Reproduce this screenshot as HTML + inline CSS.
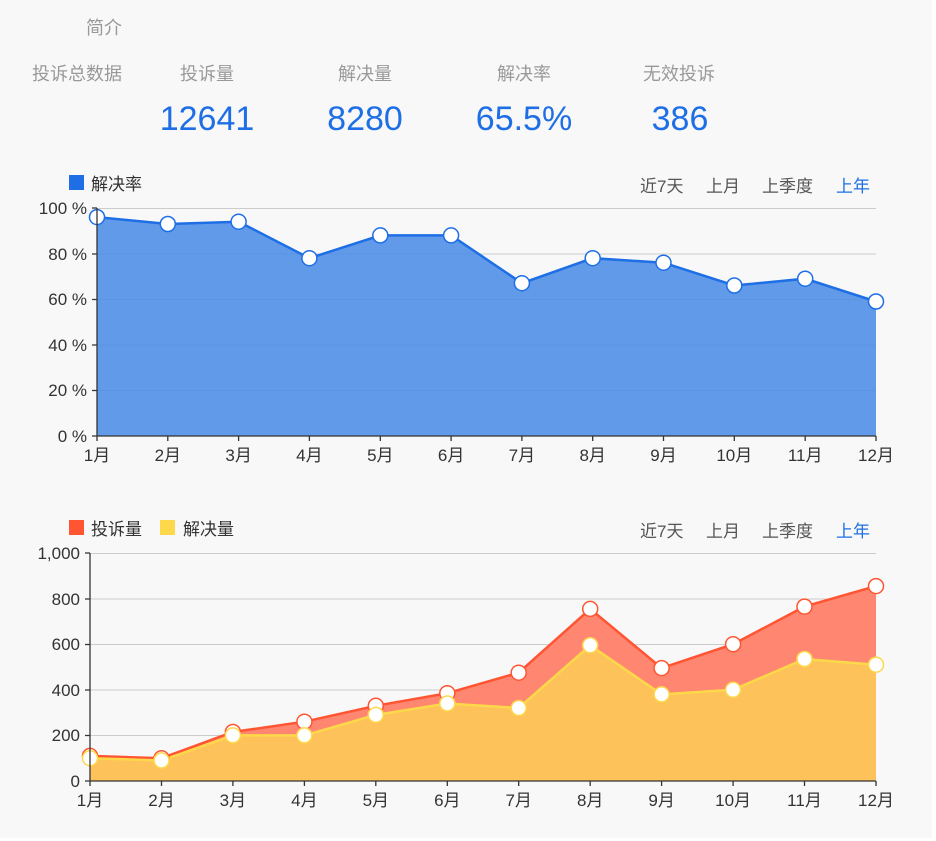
<!DOCTYPE html>
<html><head><meta charset="utf-8"><style>
body{margin:0;width:936px;height:841px;background:#fff;font-family:"Liberation Sans","Noto Sans CJK SC",sans-serif;overflow:hidden}
#bg{position:absolute;left:0;top:0;width:932px;height:838px;background:#f8f8f8}
circle{r:7.5}
</style></head><body><div id="bg"></div>
<svg width="936" height="841" style="position:absolute;left:0;top:0" font-family="Liberation Sans, Noto Sans CJK SC, sans-serif">
<g fill="#999" font-size="18"><text x="86" y="34">简介</text>
<text x="32" y="80">投诉总数据</text><text x="180" y="80">投诉量</text><text x="338" y="80">解决量</text><text x="497" y="80">解决率</text><text x="643" y="80">无效投诉</text></g>
<g fill="#1e6fe6" font-size="34" text-anchor="middle"><text x="207" y="130">12641</text><text x="365" y="130">8280</text><text x="524" y="130">65.5%</text><text x="680" y="130">386</text></g>
<rect x="69" y="175" width="15" height="15" fill="#1e6fe6"/><text x="91" y="190" font-size="17" fill="#333">解决率</text>
<g font-size="17" fill="#555"><text x="640" y="192">近7天</text><text x="706" y="192">上月</text><text x="762" y="192">上季度</text><text x="836" y="192" fill="#1e6fe6">上年</text>
<text x="640" y="537">近7天</text><text x="706" y="537">上月</text><text x="762" y="537">上季度</text><text x="836" y="537" fill="#1e6fe6">上年</text></g>
<g stroke="#ccc"><line x1="97" x2="876" y1="208.5" y2="208.5"/><line x1="97" x2="876" y1="254" y2="254"/><line x1="97" x2="876" y1="299.5" y2="299.5"/><line x1="97" x2="876" y1="345" y2="345"/><line x1="97" x2="876" y1="390.5" y2="390.5"/></g>
<path d="M97,436 L97,217.1 L167.8,224 L238.6,221.7 L309.4,258.2 L380.3,235.4 L451.1,235.4 L521.9,283.2 L592.7,258.2 L663.5,262.7 L734.3,285.5 L805.2,278.7 L876,301.5 L876,436Z" fill="#4a8ce6" fill-opacity=".88"/>
<polyline points="97,217.1 167.8,224 238.6,221.7 309.4,258.2 380.3,235.4 451.1,235.4 521.9,283.2 592.7,258.2 663.5,262.7 734.3,285.5 805.2,278.7 876,301.5" fill="none" stroke="#1e6fe6" stroke-width="2.5"/>
<g fill="#fff" stroke="#1e6fe6" stroke-width="1.5"><circle cx="97" cy="217.1" r="7.5"/><circle cx="167.8" cy="224" r="7.5"/><circle cx="238.6" cy="221.7" r="7.5"/><circle cx="309.4" cy="258.2" r="7.5"/><circle cx="380.3" cy="235.4" r="7.5"/><circle cx="451.1" cy="235.4" r="7.5"/><circle cx="521.9" cy="283.2" r="7.5"/><circle cx="592.7" cy="258.2" r="7.5"/><circle cx="663.5" cy="262.7" r="7.5"/><circle cx="734.3" cy="285.5" r="7.5"/><circle cx="805.2" cy="278.7" r="7.5"/><circle cx="876" cy="301.5" r="7.5"/></g>
<path d="M97,208V436H876M97,436v5M167.8,436v5M238.6,436v5M309.4,436v5M380.3,436v5M451.1,436v5M521.9,436v5M592.7,436v5M663.5,436v5M734.3,436v5M805.2,436v5M876,436v5M92,208h5M92,254h5M92,299.5h5M92,345h5M92,390.5h5M92,436h5" stroke="#333" fill="none" stroke-width="1.3"/>
<g font-size="17" fill="#333" text-anchor="end"><text x="87" y="214">100 %</text><text x="87" y="260">80 %</text><text x="87" y="305">60 %</text><text x="87" y="351">40 %</text><text x="87" y="396">20 %</text><text x="87" y="442">0 %</text></g>
<g font-size="17" fill="#333" text-anchor="middle"><text x="97" y="461">1月</text><text x="167.8" y="461">2月</text><text x="238.6" y="461">3月</text><text x="309.4" y="461">4月</text><text x="380.3" y="461">5月</text><text x="451.1" y="461">6月</text><text x="521.9" y="461">7月</text><text x="592.7" y="461">8月</text><text x="663.5" y="461">9月</text><text x="734.3" y="461">10月</text><text x="805.2" y="461">11月</text><text x="876" y="461">12月</text></g>
<rect x="69" y="520" width="15" height="15" fill="#ff5533"/><text x="91" y="535" font-size="17" fill="#333">投诉量</text>
<rect x="160" y="520" width="15" height="15" fill="#fdd84a"/><text x="183" y="535" font-size="17" fill="#333">解决量</text>
<g stroke="#ccc"><line x1="90" x2="876" y1="553.5" y2="553.5"/><line x1="90" x2="876" y1="599" y2="599"/><line x1="90" x2="876" y1="644.5" y2="644.5"/><line x1="90" x2="876" y1="690" y2="690"/><line x1="90" x2="876" y1="735.5" y2="735.5"/></g>
<path d="M90,781 L90,755.9 L161.5,758.2 L232.9,732 L304.4,721.7 L375.8,705.8 L447.3,693.2 L518.7,672.7 L590.2,608.9 L661.6,668.1 L733.1,644.2 L804.5,606.6 L876,586.1 L876,781Z" fill="#ff8670"/>
<path d="M90,781 L90,758.2 L161.5,760.5 L232.9,735.4 L304.4,735.4 L375.8,714.9 L447.3,703.5 L518.7,708 L590.2,645.3 L661.6,694.4 L733.1,689.8 L804.5,659 L876,664.7 L876,781Z" fill="#fdc35a"/>
<polyline points="90,755.9 161.5,758.2 232.9,732 304.4,721.7 375.8,705.8 447.3,693.2 518.7,672.7 590.2,608.9 661.6,668.1 733.1,644.2 804.5,606.6 876,586.1" fill="none" stroke="#ff5533" stroke-width="2.5"/>
<polyline points="90,758.2 161.5,760.5 232.9,735.4 304.4,735.4 375.8,714.9 447.3,703.5 518.7,708 590.2,645.3 661.6,694.4 733.1,689.8 804.5,659 876,664.7" fill="none" stroke="#fdd84a" stroke-width="2.5"/>
<g fill="#fff" stroke="#ff5533" stroke-width="1.5"><circle cx="90" cy="755.9" r="7.5"/><circle cx="161.5" cy="758.2" r="7.5"/><circle cx="232.9" cy="732" r="7.5"/><circle cx="304.4" cy="721.7" r="7.5"/><circle cx="375.8" cy="705.8" r="7.5"/><circle cx="447.3" cy="693.2" r="7.5"/><circle cx="518.7" cy="672.7" r="7.5"/><circle cx="590.2" cy="608.9" r="7.5"/><circle cx="661.6" cy="668.1" r="7.5"/><circle cx="733.1" cy="644.2" r="7.5"/><circle cx="804.5" cy="606.6" r="7.5"/><circle cx="876" cy="586.1" r="7.5"/></g>
<g fill="#fff" stroke="#fdd84a" stroke-width="1.5"><circle cx="90" cy="758.2" r="7.5"/><circle cx="161.5" cy="760.5" r="7.5"/><circle cx="232.9" cy="735.4" r="7.5"/><circle cx="304.4" cy="735.4" r="7.5"/><circle cx="375.8" cy="714.9" r="7.5"/><circle cx="447.3" cy="703.5" r="7.5"/><circle cx="518.7" cy="708" r="7.5"/><circle cx="590.2" cy="645.3" r="7.5"/><circle cx="661.6" cy="694.4" r="7.5"/><circle cx="733.1" cy="689.8" r="7.5"/><circle cx="804.5" cy="659" r="7.5"/><circle cx="876" cy="664.7" r="7.5"/></g>
<path d="M90,553V781H876M90,781v5M161.5,781v5M232.9,781v5M304.4,781v5M375.8,781v5M447.3,781v5M518.7,781v5M590.2,781v5M661.6,781v5M733.1,781v5M804.5,781v5M876,781v5M85,553h5M85,599h5M85,644.5h5M85,690h5M85,735.5h5M85,781h5" stroke="#333" fill="none" stroke-width="1.3"/>
<g font-size="17" fill="#333" text-anchor="end"><text x="80" y="559">1,000</text><text x="80" y="605">800</text><text x="80" y="650">600</text><text x="80" y="696">400</text><text x="80" y="741">200</text><text x="80" y="787">0</text></g>
<g font-size="17" fill="#333" text-anchor="middle"><text x="90" y="806">1月</text><text x="161.5" y="806">2月</text><text x="232.9" y="806">3月</text><text x="304.4" y="806">4月</text><text x="375.8" y="806">5月</text><text x="447.3" y="806">6月</text><text x="518.7" y="806">7月</text><text x="590.2" y="806">8月</text><text x="661.6" y="806">9月</text><text x="733.1" y="806">10月</text><text x="804.5" y="806">11月</text><text x="876" y="806">12月</text></g>
</svg></body></html>
